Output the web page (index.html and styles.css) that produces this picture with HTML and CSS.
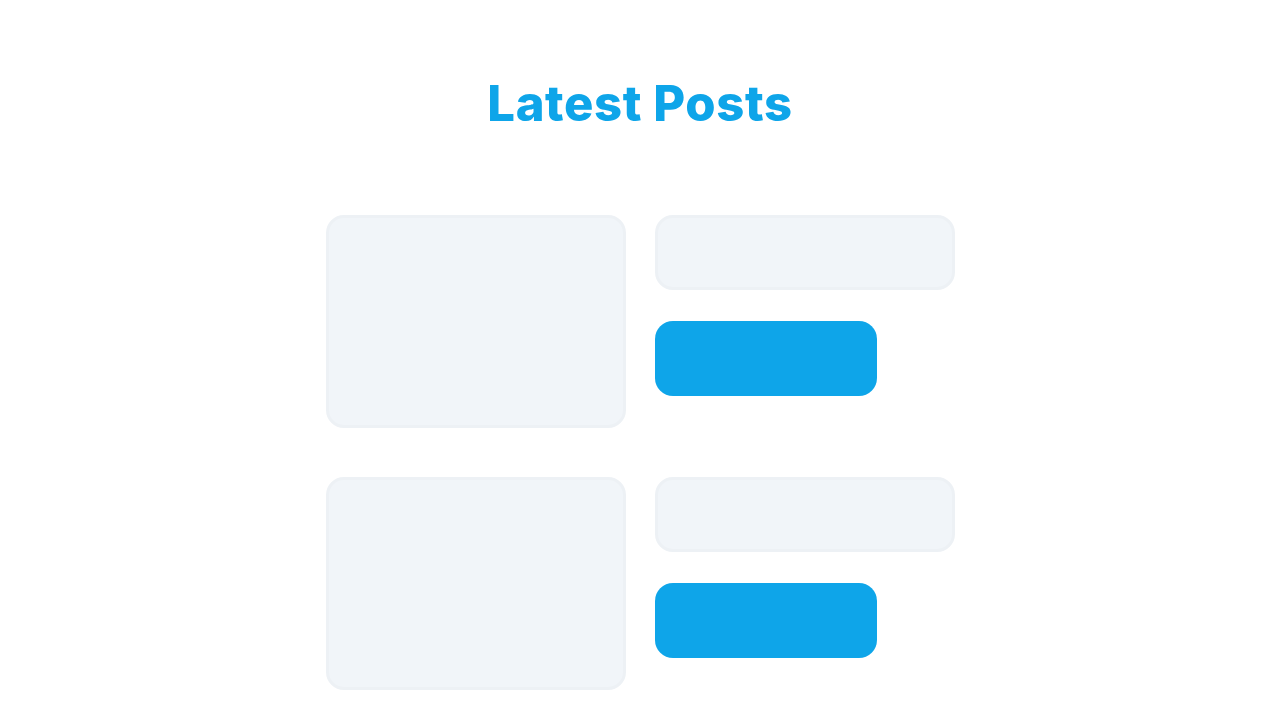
FILE: index.html
```html
<!DOCTYPE html>
<html lang="en">
<head>
<meta charset="utf-8">
<title>Latest Posts</title>
<link rel="stylesheet" href="styles.css">
</head>
<body>
<main class="page">
  <h1 class="heading">Latest Posts</h1>
  <section class="posts">
    <article class="post">
      <div class="thumb"></div>
      <div class="info">
        <div class="title-skel"></div>
        <div class="btn-skel"></div>
      </div>
    </article>
    <article class="post">
      <div class="thumb"></div>
      <div class="info">
        <div class="title-skel"></div>
        <div class="btn-skel"></div>
      </div>
    </article>
  </section>
</main>
</body>
</html>
```
FILE: styles.css
```css
* { box-sizing: border-box; }
html, body { margin: 0; padding: 0; background: #ffffff; }
body { font-family: Inter, "Noto Sans", sans-serif; }
.page {
  display: flex;
  flex-direction: column;
  align-items: center;
  padding-top: 72px;
}
.heading {
  margin: 0;
  font-size: 49px;
  line-height: 64px;
  font-weight: 800;
  letter-spacing: 0.6px;
  color: #0ea5e9;
}
.posts {
  margin-top: 79px;
  display: flex;
  flex-direction: column;
  gap: 49px;
}
.post {
  display: grid;
  grid-template-columns: 300px 300px;
  column-gap: 29px;
}
.thumb {
  height: 213px;
  background: #f1f5f9;
  border: 3px solid #edf1f5;
  border-radius: 18px;
}
.info {
  display: flex;
  flex-direction: column;
  gap: 31px;
}
.title-skel {
  height: 75px;
  background: #f1f5f9;
  border: 3px solid #edf1f5;
  border-radius: 18px;
}
.btn-skel {
  width: 222px;
  height: 75px;
  background: #0ea5e9;
  border-radius: 18px;
}
```
